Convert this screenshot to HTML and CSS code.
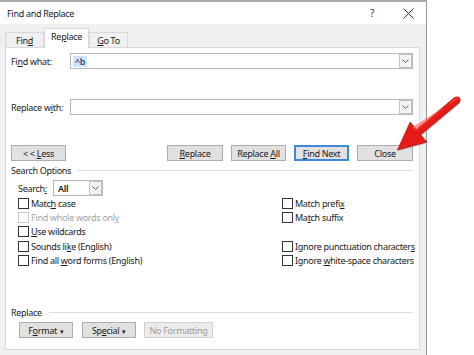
FILE: index.html
```html
<!DOCTYPE html>
<html>
<head>
<meta charset="utf-8">
<link rel="stylesheet" href="styles.css">
</head>
<body>
<div class="window">
  <div class="titlebar">
    <span class="title">Find and Replace</span>
    <span class="help">?</span>
    <span class="close-x">
      <svg width="11" height="11" viewBox="0 0 11 11"><path d="M0.5 0.5L10.5 10.5M10.5 0.5L0.5 10.5" stroke="#333" stroke-width="1" fill="none"/></svg>
    </span>
  </div>
  <div class="tabs">
    <div class="tab"><span>Fin<u>d</u></span></div>
    <div class="tab active"><span>Re<u>p</u>lace</span></div>
    <div class="tab"><span><u>G</u>o To</span></div>
  </div>
  <div class="panel">
    <div class="field-row">
      <label class="field-label">Fi<u>n</u>d what:</label>
      <div class="combo">
        <span class="combo-text"><span class="sel">^b</span></span>
        <span class="drop"><svg width="7" height="4" viewBox="0 0 7 4"><path d="M0.5 0.5L3.5 3.5L6.5 0.5" stroke="#555" fill="none"/></svg></span>
      </div>
    </div>
    <div class="field-row second">
      <label class="field-label">Replace w<u>i</u>th:</label>
      <div class="combo">
        <span class="combo-text"></span>
        <span class="drop"><svg width="7" height="4" viewBox="0 0 7 4"><path d="M0.5 0.5L3.5 3.5L6.5 0.5" stroke="#555" fill="none"/></svg></span>
      </div>
    </div>
    <div class="button-row">
      <button class="btn w55"><span>&lt; &lt; <u>L</u>ess</span></button>
      <div class="btn-group">
        <button class="btn w56"><span><u>R</u>eplace</span></button>
        <button class="btn w55"><span>Replace <u>A</u>ll</span></button>
        <button class="btn w55 default"><span><u>F</u>ind Next</span></button>
        <button class="btn w56"><span>Close</span></button>
      </div>
    </div>
    <div class="group-title"><span>Search Options</span><span class="rule"></span></div>
    <div class="search-row">
      <span class="search-label">Search<u>:</u></span>
      <div class="select">
        <span class="select-text">All</span>
        <span class="drop small"><svg width="7" height="4" viewBox="0 0 7 4"><path d="M0.5 0.5L3.5 3.5L6.5 0.5" stroke="#555" fill="none"/></svg></span>
      </div>
    </div>
    <div class="options">
      <label class="opt"><span class="box"></span><span class="txt">Matc<u>h</u> case</span></label>
      <label class="opt"><span class="box"></span><span class="txt">Match prefi<u>x</u></span></label>
      <label class="opt disabled"><span class="box"></span><span class="txt">Find whole words onl<u>y</u></span></label>
      <label class="opt"><span class="box"></span><span class="txt">Ma<u>t</u>ch suffix</span></label>
      <label class="opt"><span class="box"></span><span class="txt"><u>U</u>se wildcards</span></label>
      <span></span>
      <label class="opt"><span class="box"></span><span class="txt">Sounds li<u>k</u>e (English)</span></label>
      <label class="opt"><span class="box"></span><span class="txt">Ignore punctuation character<u>s</u></span></label>
      <label class="opt"><span class="box"></span><span class="txt">Find all <u>w</u>ord forms (English)</span></label>
      <label class="opt"><span class="box"></span><span class="txt">Ignore <u>w</u>hite-space characters</span></label>
    </div>
    <div class="group-title replace-title"><span>Replace</span><span class="rule"></span></div>
    <div class="bottom-row">
      <button class="btn w54"><span>F<u>o</u>rmat <span class="caret">▾</span></span></button>
      <button class="btn w54"><span>Sp<u>e</u>cial <span class="caret">▾</span></span></button>
      <button class="btn w69 disabled-btn"><span>No Formatting</span></button>
    </div>
  </div>
</div>
<svg class="arrow" width="90" height="70" viewBox="390 92 90 70">
  <polygon points="459.9,104.2 455.5,98.8 417.0,130.9 410.9,123.6 398.5,151.5 427.5,143.6 421.4,136.3" fill="#9a9a9a" opacity="0.35"/>
  <polygon points="459.2,102.7 454.8,97.3 416.3,129.4 410.2,122.1 397.5,150 426.8,142.1 420.7,134.8" fill="#e51b17" stroke="#b01410" stroke-width="0.8" stroke-linejoin="round"/>
  <circle cx="457" cy="100" r="3.5" fill="#e51b17"/>
  <polygon points="457.5,99 455.5,98.3 416.0,131 412.5,127" fill="#ff5a50" opacity="0.6"/>
</svg>
</body>
</html>
```

FILE: styles.css
```css
* { box-sizing: border-box; }
html, body {
  margin: 0;
  padding: 0;
  background: #ffffff;
  width: 474px;
  height: 355px;
  overflow: hidden;
}
body {
  font-family: "Noto Sans", "Open Sans", sans-serif;
  font-size: 9px;
  letter-spacing: -0.3px;
  color: #1a1a1a;
  position: relative;
}
u { text-decoration: underline; text-underline-offset: 1px; }

.window {
  width: 427px;
  height: 355px;
  background: #f0f0f0;
  border-top: 2px solid #a9a9a9;
  border-right: 1px solid #9a9a9a;
  display: flex;
  flex-direction: column;
}
.titlebar {
  height: 22px;
  background: #ffffff;
  display: flex;
  align-items: center;
  padding-left: 7px;
  font-size: 9px;
  flex-shrink: 0;
}
.title { flex: 1; color: #222; }
.help { width: 10px; margin-right: 23px; font-size: 10px; color: #333; }
.close-x { width: 11px; margin-right: 12px; display: flex; }

.tabs {
  height: 23px;
  display: flex;
  align-items: flex-end;
  padding-left: 5px;
  flex-shrink: 0;
}
.tab {
  height: 16px;
  border: 1px solid #d9d9d9;
  border-bottom: none;
  background: #f0f0f0;
  display: flex;
  align-items: center;
  justify-content: center;
  width: 39px;
  margin-bottom: -1px;
  white-space: nowrap;
}
.tab.active {
  height: 20px;
  width: 45px;
  background: #ffffff;
  position: relative;
  z-index: 1;
  padding-bottom: 4px;
}

.panel {
  margin: 0 6px 0 5px;
  height: 303px;
  background: #ffffff;
  border: 1px solid #d9d9d9;
  padding: 5px 6px 0 5px;
  display: flex;
  flex-direction: column;
}
.field-row {
  display: flex;
  align-items: center;
  height: 16px;
}
.field-row.second { margin-top: 30px; }
.field-label { width: 59px; flex-shrink: 0; white-space: nowrap; }
.combo {
  flex: 1;
  height: 16px;
  border: 1px solid #b9b9b9;
  display: flex;
  align-items: center;
}
.combo-text { flex: 1; padding-left: 2px; display: flex; align-items: center; }
.sel {
  background: #cfe4fa;
  padding: 0 2px;
  line-height: 11px;
  font-weight: 600;
  color: #2b4a77;
}
.drop {
  width: 13px;
  height: 14px;
  border: 1px solid #c4c4c4;
  background: #f3f3f3;
  display: flex;
  align-items: center;
  justify-content: center;
}

.button-row {
  margin-top: 30px;
  display: flex;
  height: 16px;
}
.btn-group {
  margin-left: auto;
  display: flex;
  gap: 8px;
}
.btn {
  height: 16px;
  font: inherit;
  letter-spacing: inherit;
  color: #1a1a1a;
  background: #e1e1e1;
  border: 1px solid #adadad;
  padding: 0;
  display: flex;
  align-items: center;
  justify-content: center;
  white-space: nowrap;
}
.w54 { width: 54px; }
.w55 { width: 55px; }
.w56 { width: 56px; }
.w69 { width: 69px; }
.btn.default { border: 2px solid #3c8ad8; }
.caret { font-size: 7px; margin-left: 1px; }

.group-title {
  margin-top: 4px;
  height: 10px;
  display: flex;
  align-items: center;
  gap: 7px;
  white-space: nowrap;
}
.group-title .rule {
  flex: 1;
  height: 1px;
  background: #dcdcdc;
}
.search-row {
  margin-top: 5px;
  padding-left: 7px;
  display: flex;
  align-items: center;
  height: 16px;
}
.search-label { width: 35px; white-space: nowrap; }
.select {
  width: 50px;
  height: 16px;
  border: 1px solid #b9b9b9;
  display: flex;
  align-items: center;
}
.select-text { flex: 1; padding-left: 4px; font-weight: 600; }

.options {
  margin-top: 0;
  padding-left: 7px;
  display: grid;
  grid-template-columns: 264px 1fr;
  grid-auto-rows: 14.3px;
}
.opt {
  display: flex;
  align-items: center;
  gap: 2px;
  white-space: nowrap;
}
.box {
  width: 11px;
  height: 11px;
  border: 1px solid #333;
  background: #fff;
  flex-shrink: 0;
}
.opt.disabled { color: #a3a3a3; }
.opt.disabled .box { border-color: #cccccc; }

.replace-title { margin-top: 40px; }
.bottom-row {
  margin-top: 5px;
  padding-left: 8px;
  display: flex;
  gap: 9px;
}
.bottom-row .btn:last-child { margin-left: -1px; }
.disabled-btn { color: #9c9c9c; background: #ececec; border-color: #d0d0d0; }

.arrow {
  position: absolute;
  left: 390px;
  top: 92px;
}
```
